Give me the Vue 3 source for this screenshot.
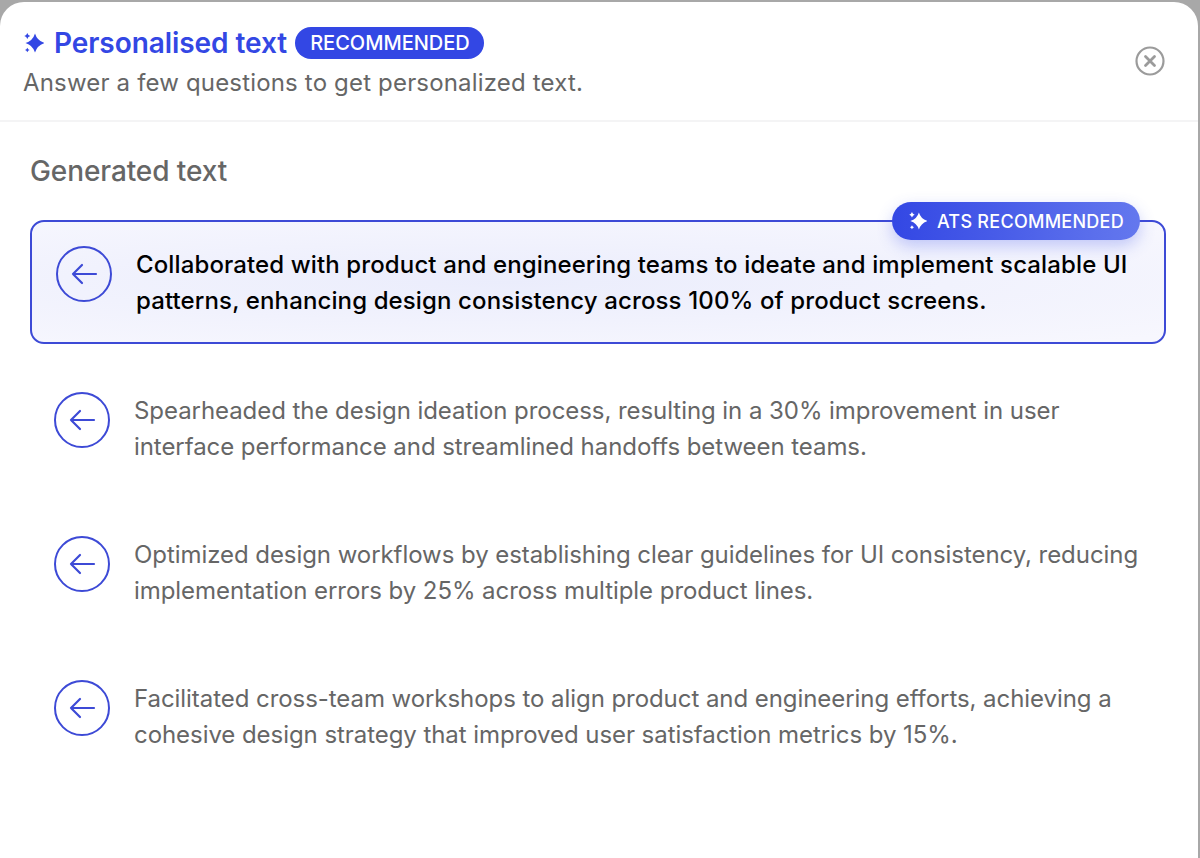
<script setup>
const opciones = [
  {
    texto: 'Spearheaded the design ideation process, resulting in a 30% improvement in user interface performance and streamlined handoffs between teams.'
  },
  {
    texto: 'Optimized design workflows by establishing clear guidelines for UI consistency, reducing implementation errors by 25% across multiple product lines.'
  },
  {
    texto: 'Facilitated cross-team workshops to align product and engineering efforts, achieving a cohesive design strategy that improved user satisfaction metrics by 15%.'
  }
];
</script>

<template>
  <div class="pagina">
    <div class="modal">
      <header class="cabecera">
        <div>
          <div class="titulo-fila">
            <svg class="chispa" viewBox="0 0 20 20" fill="#3347e4">
              <path d="M11 .5Q13.200 7.800 20.500 10 13.200 12.200 11 19.500 8.800 12.200 1.500 10 8.800 7.800 11 .5z" />
              <path d="M3.300 0Q4 2.300 6.300 3 4 3.700 3.300 6 2.600 3.700.3 3 2.600 2.300 3.300 0z" />
              <path d="M3.300 14.700Q3.900 16.400 5.600 17 3.900 17.600 3.300 19.300 2.700 17.600 1 17 2.700 16.400 3.300 14.700z" />
            </svg>
            <h1>Personalised text</h1>
            <span class="etiqueta">RECOMMENDED</span>
          </div>
          <p class="subtitulo">Answer a few questions to get personalized text.</p>
        </div>
        <svg class="cerrar" viewBox="0 0 30 30" fill="none" stroke="#9b9b9b">
          <circle cx="15" cy="15" r="13.500" stroke-width="2.200" />
          <path d="M10.500 10.500l9 9M19.500 10.500l-9 9" stroke-width="2.800" stroke-linecap="round" />
        </svg>
      </header>

      <main class="contenido">
        <h2>Generated text</h2>

        <div class="tarjeta">
          <span class="ats">
            <svg class="chispa-ats" viewBox="0 0 20 20" fill="#fff">
              <path d="M11 .5Q13.200 7.800 20.500 10 13.200 12.200 11 19.500 8.800 12.200 1.500 10 8.800 7.800 11 .5z" />
              <path d="M3.300 0Q4 2.300 6.300 3 4 3.700 3.300 6 2.600 3.700.3 3 2.600 2.300 3.300 0z" />
              <path d="M3.300 14.700Q3.900 16.400 5.600 17 3.900 17.600 3.300 19.300 2.700 17.600 1 17 2.700 16.400 3.300 14.700z" />
            </svg>
            <span>ATS RECOMMENDED</span>
          </span>
          <svg class="flecha" viewBox="0 0 56 56" fill="none" stroke="#3d4ad6">
            <circle cx="28" cy="28" r="27" stroke-width="2" />
            <path d="M17 28h23M26 19L17 28l9 9" stroke-width="2.200" stroke-linecap="round" stroke-linejoin="round" />
          </svg>
          <p>Collaborated with product and engineering teams to ideate and implement scalable UI patterns, enhancing design consistency across 100% of product screens.</p>
        </div>

        <div v-for="opcion in opciones" :key="opcion.texto" class="opcion">
          <svg class="flecha" viewBox="0 0 56 56" fill="none" stroke="#3d4ad6">
            <circle cx="28" cy="28" r="27" stroke-width="2" />
            <path d="M17 28h23M26 19L17 28l9 9" stroke-width="2.200" stroke-linecap="round" stroke-linejoin="round" />
          </svg>
          <p>{{ opcion.texto }}</p>
        </div>
      </main>
    </div>
  </div>
</template>

<style>
html,
body {
  margin: 0;
  background: #a8a8a8;
}
</style>

<style scoped>
.pagina {
  width: 1200px;
  height: 858px;
  overflow: hidden;
  padding: 2px 2px 0 0;
  box-sizing: border-box;
  font-family: Inter, 'Liberation Sans', sans-serif;
}

.modal {
  height: 100%;
  background: #fff;
  border-radius: 24px 24px 0 0;
}

.cabecera {
  display: flex;
  justify-content: space-between;
  align-items: center;
  height: 120px;
  box-sizing: border-box;
  padding: 2px 33px 0 23px;
  border-bottom: 2px solid #f4f4f5;
}

.titulo-fila {
  display: flex;
  align-items: center;
  height: 32px;
}

.chispa {
  width: 20px;
  height: 20px;
  margin: 0 10px 0 1px;
}

h1 {
  margin: 0;
  font-size: 28px;
  font-weight: 600;
  letter-spacing: -0.06px;
  color: #3347e4;
}

.etiqueta {
  margin-left: 8px;
  padding: 0 14px 0 15px;
  height: 32px;
  line-height: 32px;
  border-radius: 16px;
  background: #3347e4;
  color: #fff;
  font-size: 20px;
  font-weight: 500;
}

.subtitulo {
  margin: 10px 0 0;
  font-size: 24px;
  line-height: 28px;
  letter-spacing: 0.17px;
  color: #666;
}

.cerrar {
  width: 30px;
  height: 30px;
  margin-bottom: 2px;
}

.contenido {
  padding: 32px 32px 0 30px;
}

h2 {
  margin: 0 0 32px;
  font-size: 28px;
  line-height: 34px;
  font-weight: 500;
  letter-spacing: -0.1px;
  color: #666;
}

.tarjeta {
  position: relative;
  display: flex;
  align-items: flex-start;
  gap: 24px;
  height: 124px;
  box-sizing: border-box;
  padding: 24px 24px 0;
  border: 2px solid #3d4ad6;
  border-radius: 14px;
  background: radial-gradient(ellipse at 42% 50%, #ebedfc, #f7f7fe 95%);
  color: #000;
}

.tarjeta p {
  margin-top: 1px;
  font-weight: 500;
  letter-spacing: 0.12px;
}

.ats {
  position: absolute;
  top: -20px;
  right: 24px;
  display: flex;
  align-items: center;
  gap: 10px;
  height: 38px;
  padding: 0 16px 0 17px;
  border-radius: 19px;
  background: linear-gradient(90deg, #3347e4, #6478ee);
  box-shadow: 0 6px 16px rgba(70, 90, 235, 0.3);
  color: #fff;
  font-size: 18px;
  font-weight: 500;
  letter-spacing: 0.27px;
}

.chispa-ats {
  width: 18px;
  height: 18px;
}

.flecha {
  flex: none;
  width: 56px;
  height: 56px;
}

.opcion {
  display: flex;
  align-items: flex-start;
  gap: 24px;
  height: 144px;
  box-sizing: border-box;
  padding: 48px 22px 0 24px;
  color: #666;
}

.opcion p {
  margin-top: 1px;
  letter-spacing: -0.06px;
}

p {
  margin: 0;
  font-size: 24px;
  line-height: 36px;
}
</style>
